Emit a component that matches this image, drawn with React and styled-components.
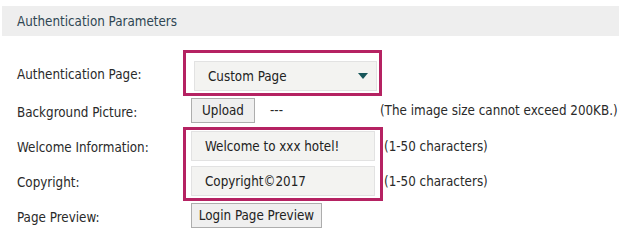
import styled, { createGlobalStyle } from "styled-components"

const GlobalStyle = createGlobalStyle`
    body {
        margin: 0;
        background: #fff;
        font-family: "DejaVu Sans Condensed", "DejaVu Sans", sans-serif;
        font-size: 13.3px;
        color: #2a2a2a;
    }
`

const App = () => {
    return (
        <Wrapper>
            <GlobalStyle />
            <Header>Authentication Parameters</Header>
            <Form>
                <Row>
                    <Label>Authentication Page:</Label>
                    <Highlight $pad="8px 2px 2px 8px">
                        <Select>
                            <span>Custom Page</span>
                            <Caret />
                        </Select>
                    </Highlight>
                </Row>
                <Row $mt="2px">
                    <Label>Background Picture:</Label>
                    <Button $w="64px">Upload</Button>
                    <Dash>---</Dash>
                    <Hint $ml="97px">(The image size cannot exceed 200KB.)</Hint>
                </Row>
                <Group>
                    <LabelCol>
                        <Label>Welcome Information:</Label>
                        <Label>Copyright:</Label>
                    </LabelCol>
                    <Highlight $pad="1px 5px 2px 5px">
                        <Inputs>
                            <Field>Welcome to xxx hotel!</Field>
                            <Field>Copyright©2017</Field>
                        </Inputs>
                    </Highlight>
                    <HintCol>
                        <Hint>(1-50 characters)</Hint>
                        <Hint>(1-50 characters)</Hint>
                    </HintCol>
                </Group>
                <Row $mt="2px">
                    <Label>Page Preview:</Label>
                    <Button $w="131px">Login Page Preview</Button>
                </Row>
            </Form>
        </Wrapper>
    )
}

export default App

const Wrapper = styled.div`
    width: 619px;
    height: 229px;
    overflow: hidden;
    padding-top: 6px;
    box-sizing: border-box;
`
const Header = styled.div`
    margin-left: 2px;
    height: 30px;
    background: #eeeeee;
    color: #2f4653;
    display: flex;
    align-items: center;
    padding-left: 15px;
`
const Form = styled.div`
    display: flex;
    flex-direction: column;
    padding-left: 17px;
    margin-top: 14px;
`
const Row = styled.div`
    display: flex;
    align-items: center;
    margin-top: ${p => p.$mt || "0"};
`
const Label = styled.div`
    width: 166px;
    flex-shrink: 0;
    padding-top: 3px;
    white-space: nowrap;
`
const Highlight = styled.div`
    border: 3px solid #b52262;
    padding: ${p => p.$pad};
`
const Select = styled.div`
    width: 183px;
    height: 30px;
    box-sizing: border-box;
    border: 1px solid #e2e2e2;
    background: #f3f3f1;
    display: flex;
    align-items: center;
    justify-content: space-between;
    padding: 0 8px 0 13px;
    color: #222;
`
const Caret = styled.span`
    width: 0;
    height: 0;
    border-left: 5px solid transparent;
    border-right: 5px solid transparent;
    border-top: 6px solid #17565a;
`
const Button = styled.div`
    width: ${p => p.$w};
    height: 25px;
    box-sizing: border-box;
    border: 1px solid #adadad;
    background: #efefef;
    display: flex;
    align-items: center;
    justify-content: center;
    margin-left: 8px;
    color: #222;
    white-space: nowrap;
`
const Dash = styled.span`
    margin-left: 15px;
`
const Hint = styled.span`
    margin-left: ${p => p.$ml || "0"};
    white-space: nowrap;
`
const Group = styled.div`
    display: flex;
    margin-top: 4px;
`
const LabelCol = styled.div`
    width: 166px;
    flex-shrink: 0;
    display: flex;
    flex-direction: column;
    justify-content: space-around;
    padding: 4px 0 5px;
    gap: 5px;
`
const Inputs = styled.div`
    display: flex;
    flex-direction: column;
    gap: 5px;
`
const Field = styled.div`
    width: 184px;
    height: 30px;
    box-sizing: border-box;
    border: 1px solid #e2e2e2;
    background: #f3f3f1;
    display: flex;
    align-items: center;
    padding-left: 13px;
    color: #222;
`
const HintCol = styled.div`
    display: flex;
    flex-direction: column;
    justify-content: space-around;
    padding: 4px 0 5px 1px;
    gap: 5px;
`
